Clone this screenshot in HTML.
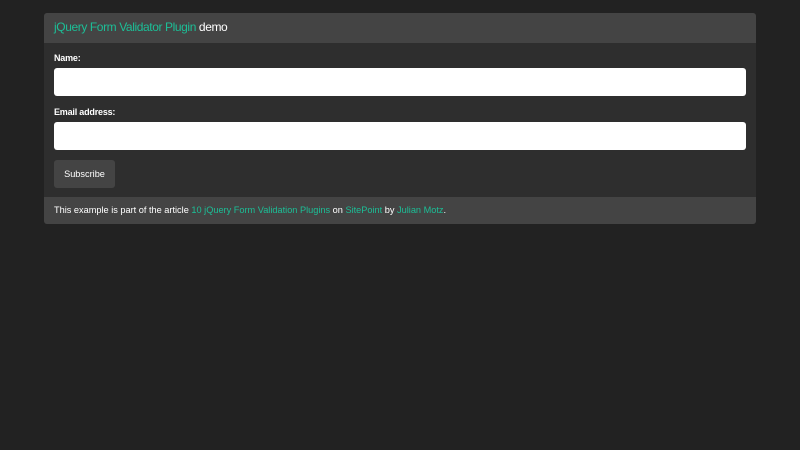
<!DOCTYPE html>
<html><head><meta charset="utf-8"><style>
html,body{margin:0;padding:0;background:#222;width:800px;height:450px;overflow:hidden;font-family:"Liberation Sans",sans-serif;}
.panel{position:absolute;left:44px;top:13px;width:712px;height:211px;background:#2e2e2e;border-radius:3px;overflow:hidden;}
.head{height:30px;background:#444;padding-left:10px;font-size:12px;letter-spacing:-0.4px;line-height:29px;color:#fff;}
a{color:#1cbf97;text-decoration:none}
.body{padding:9px 10px 0 10px;}
label{display:block;font-size:9px;letter-spacing:-0.2px;font-weight:bold;color:#fff;height:13px;line-height:13px;padding-bottom:3px;}
.inp{height:28px;background:#fff;border-radius:3px;margin-bottom:10px;}
.inp1{margin-bottom:10px}
.btn{display:inline-block;width:61px;height:28px;background:#444;color:#fff;font-size:9.2px;line-height:28px;text-align:center;border-radius:3px;}
.foot{position:absolute;left:0;right:0;bottom:0;height:27px;background:#444;padding-left:10px;font-size:9.2px;line-height:27px;color:#fff;}
</style></head><body>
<div class="panel">
<div class="head"><a>jQuery Form Validator Plugin</a> demo</div>
<div class="body">
<label>Name:</label><div class="inp"></div>
<label>Email address:</label><div class="inp"></div>
<div class="btn">Subscribe</div>
</div>
<div class="foot">This example is part of the article <a>10 jQuery Form Validation Plugins</a> on <a>SitePoint</a> by <a>Julian Motz</a>.</div>
</div>
</body></html>
